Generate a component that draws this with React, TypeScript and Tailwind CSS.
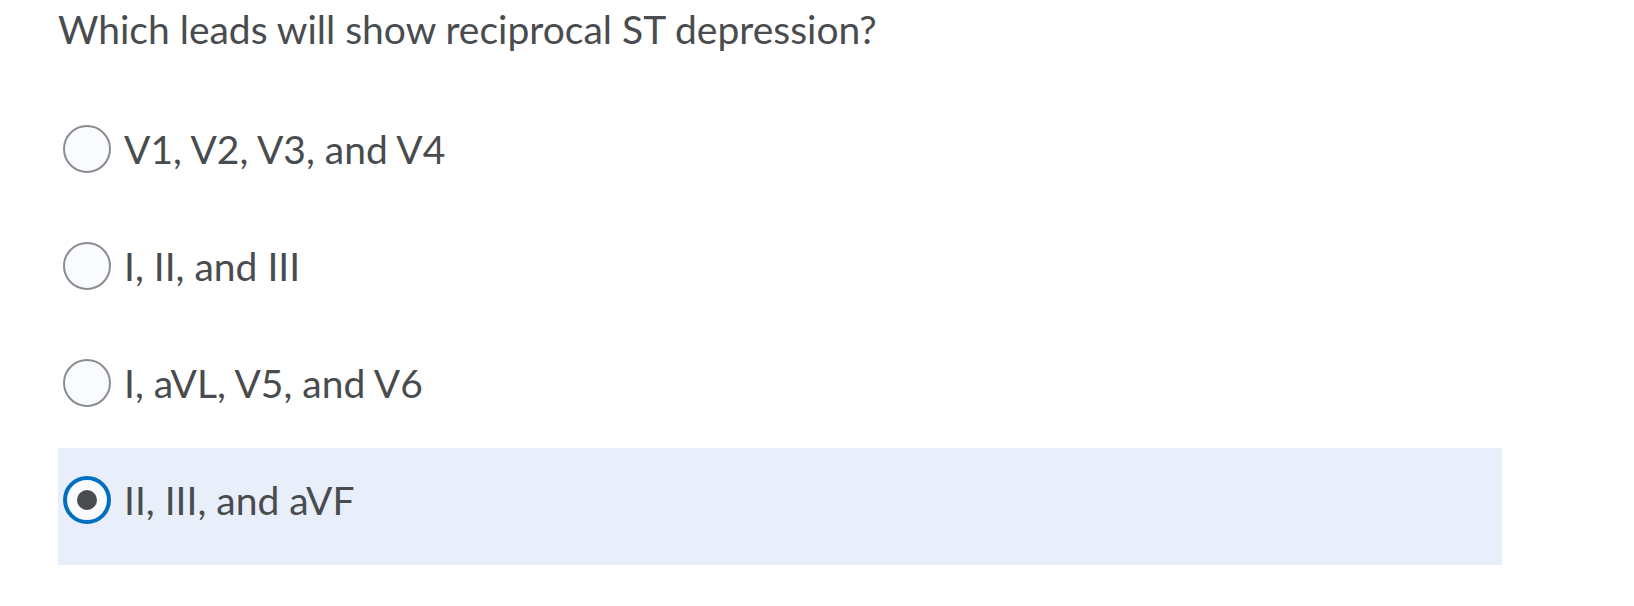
import { useState } from 'react';

const options = ['V1, V2, V3, and V4', 'I, II, and III', 'I, aVL, V5, and V6', 'II, III, and aVF'];

function Radio({ checked }: { checked: boolean }) {
  if (checked) {
    return (
      <span className="flex h-[48px] w-[48px] shrink-0 items-center justify-center rounded-full border-[4px] border-[#006fbf] bg-[#f9fbff]">
        <span className="h-[20px] w-[20px] rounded-full bg-[#494c4e]" />
      </span>
    );
  }
  return <span className="h-[48px] w-[48px] shrink-0 rounded-full border-[2px] border-[#8a8d90] bg-[#f9fbff]" />;
}

export default function App() {
  const [selected, setSelected] = useState(3);

  return (
    <div
      className="h-[606px] w-[1634px] bg-white pl-[58px] pt-[6px] text-[#494c4e]"
      style={{ fontFamily: 'Lato, "Open Sans", sans-serif' }}
    >
      <h1 className="text-[39px] leading-[1.2]">Which leads will show reciprocal ST depression?</h1>
      <div className="mt-[44px] w-[1444px]">
        {options.map((option, index) => (
          <label
            key={option}
            onClick={() => setSelected(index)}
            className={`flex h-[117px] cursor-pointer items-start gap-[13px] pl-[5px] pt-[28px] ${
              selected === index ? 'bg-[#e8effb]' : ''
            }`}
          >
            <Radio checked={selected === index} />
            <span className="text-[39px] leading-[48px]">{option}</span>
          </label>
        ))}
      </div>
    </div>
  );
}
